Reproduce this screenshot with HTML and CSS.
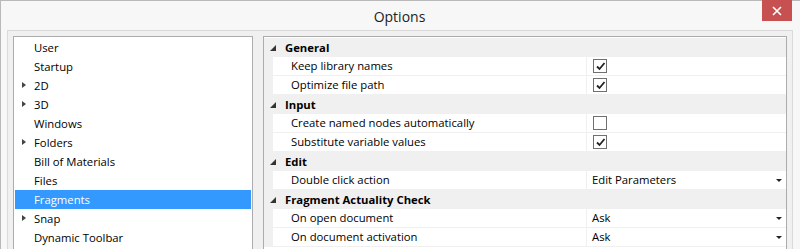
FILE: index.html
```html
<!DOCTYPE html>
<html>
<head>
<meta charset="utf-8">
<title>Options</title>
<link rel="stylesheet" href="styles.css">
</head>
<body>
<div class="window">
  <div class="titlebar">
    <span class="title">Options</span>
    <div class="close"><svg width="10" height="10" viewBox="0 0 10 10"><path d="M1 1 L9 9 M9 1 L1 9" stroke="#fff" stroke-width="1.6"/></svg></div>
  </div>
  <div class="client">
    <div class="tree">
      <div class="item">User</div>
      <div class="item">Startup</div>
      <div class="item has-children">2D</div>
      <div class="item has-children">3D</div>
      <div class="item">Windows</div>
      <div class="item has-children">Folders</div>
      <div class="item">Bill of Materials</div>
      <div class="item">Files</div>
      <div class="item selected">Fragments</div>
      <div class="item has-children">Snap</div>
      <div class="item">Dynamic Toolbar</div>
    </div>
    <div class="grid">
      <div class="cat"><svg class="cat-glyph" width="6" height="6" viewBox="0 0 6 6"><polygon points="6,0 6,6 0,6" fill="#333"/></svg>General</div>
      <div class="prop"><div class="gutter"></div><div class="name">Keep library names</div><div class="value"><span class="check on"><svg width="11" height="11" viewBox="0 0 11 11"><path d="M2 5.5 L4.5 8 L9.5 2" fill="none" stroke="#222" stroke-width="1.8"/></svg></span></div></div>
      <div class="prop"><div class="gutter"></div><div class="name">Optimize file path</div><div class="value"><span class="check on"><svg width="11" height="11" viewBox="0 0 11 11"><path d="M2 5.5 L4.5 8 L9.5 2" fill="none" stroke="#222" stroke-width="1.8"/></svg></span></div></div>
      <div class="cat"><svg class="cat-glyph" width="6" height="6" viewBox="0 0 6 6"><polygon points="6,0 6,6 0,6" fill="#333"/></svg>Input</div>
      <div class="prop"><div class="gutter"></div><div class="name">Create named nodes automatically</div><div class="value"><span class="check"></span></div></div>
      <div class="prop"><div class="gutter"></div><div class="name">Substitute variable values</div><div class="value"><span class="check on"><svg width="11" height="11" viewBox="0 0 11 11"><path d="M2 5.5 L4.5 8 L9.5 2" fill="none" stroke="#222" stroke-width="1.8"/></svg></span></div></div>
      <div class="cat"><svg class="cat-glyph" width="6" height="6" viewBox="0 0 6 6"><polygon points="6,0 6,6 0,6" fill="#333"/></svg>Edit</div>
      <div class="prop"><div class="gutter"></div><div class="name">Double click action</div><div class="value combo"><span>Edit Parameters</span><span class="drop"></span></div></div>
      <div class="cat"><svg class="cat-glyph" width="6" height="6" viewBox="0 0 6 6"><polygon points="6,0 6,6 0,6" fill="#333"/></svg>Fragment Actuality Check</div>
      <div class="prop"><div class="gutter"></div><div class="name">On open document</div><div class="value combo"><span>Ask</span><span class="drop"></span></div></div>
      <div class="prop"><div class="gutter"></div><div class="name">On document activation</div><div class="value combo"><span>Ask</span><span class="drop"></span></div></div>
    </div>
  </div>
</div>
</body>
</html>
```

FILE: styles.css
```css
* { box-sizing: border-box; }
html, body {
  margin: 0;
  padding: 0;
  width: 800px;
  height: 249px;
  overflow: hidden;
  background: #f7f7f7;
}
body {
  font-family: "Segoe UI", "Open Sans", "Noto Sans", sans-serif;
  font-size: 11.3px;
  color: #000;
}
.window {
  width: 800px;
  height: 249px;
  border-top: 1px solid #b9b9b9;
  border-left: 1px solid #b9b9b9;
  display: flex;
  flex-direction: column;
}
.titlebar {
  height: 29px;
  flex: none;
  display: flex;
  align-items: center;
  justify-content: center;
  position: relative;
}
.title {
  font-size: 14px;
  color: #222;
  margin-top: 2px;
  margin-left: -2px;
}
.close {
  position: absolute;
  right: 8px;
  top: -1px;
  width: 30px;
  height: 21px;
  background: #c75050;
  display: flex;
  align-items: center;
  justify-content: center;
}
.client {
  margin-left: 6px;
  width: 786px;
  height: 219px;
  flex: none;
  background: #f0f0f0;
  border: 1px solid #dadada;
  border-bottom: none;
  padding: 5px 5px 0 5px;
  display: flex;
  gap: 10px;
  align-items: flex-start;
}
.tree {
  width: 240px;
  height: 213px;
  flex: none;
  background: #fff;
  border: 1px solid #acacac;
  border-bottom: none;
  padding: 1px;
  overflow: hidden;
}
.item {
  height: 19px;
  line-height: 19px;
  padding-left: 19px;
  position: relative;
  white-space: nowrap;
}
.item.has-children::before {
  content: "";
  position: absolute;
  left: 7px;
  top: 6px;
  border-left: 4px solid #444;
  border-top: 3.5px solid transparent;
  border-bottom: 3.5px solid transparent;
}
.item.selected {
  background: #3399ff;
  color: #fff;
}
.grid {
  width: 524px;
  height: 213px;
  flex: none;
  background: #fff;
  border: 1px solid #acacac;
  border-bottom: none;
  padding-top: 1px;
  overflow: hidden;
}
.cat {
  height: 19px;
  line-height: 19px;
  background: #f0f0f0;
  font-weight: bold;
  padding-left: 21px;
  position: relative;
  white-space: nowrap;
}
.cat-glyph {
  position: absolute;
  left: 6px;
  top: 7px;
}
.prop {
  height: 19px;
  display: flex;
}
.gutter {
  width: 9px;
  flex: none;
  background: #f0f0f0;
}
.name {
  width: 314px;
  flex: none;
  padding-left: 18px;
  line-height: 18px;
  border-bottom: 1px solid #f0f0f0;
  border-right: 1px solid #f0f0f0;
  white-space: nowrap;
}
.value {
  flex: 1;
  padding-left: 6px;
  border-bottom: 1px solid #f0f0f0;
  display: flex;
  align-items: center;
  line-height: 18px;
}
.combo {
  justify-content: space-between;
  padding-right: 4px;
  padding-left: 5px;
}
.drop {
  width: 0;
  height: 0;
  border-top: 3px solid #222;
  border-left: 3px solid transparent;
  border-right: 3px solid transparent;
}
.check {
  width: 14px;
  height: 14px;
  border: 1px solid #707070;
  background: #fff;
  display: flex;
  align-items: center;
  justify-content: center;
}
```
